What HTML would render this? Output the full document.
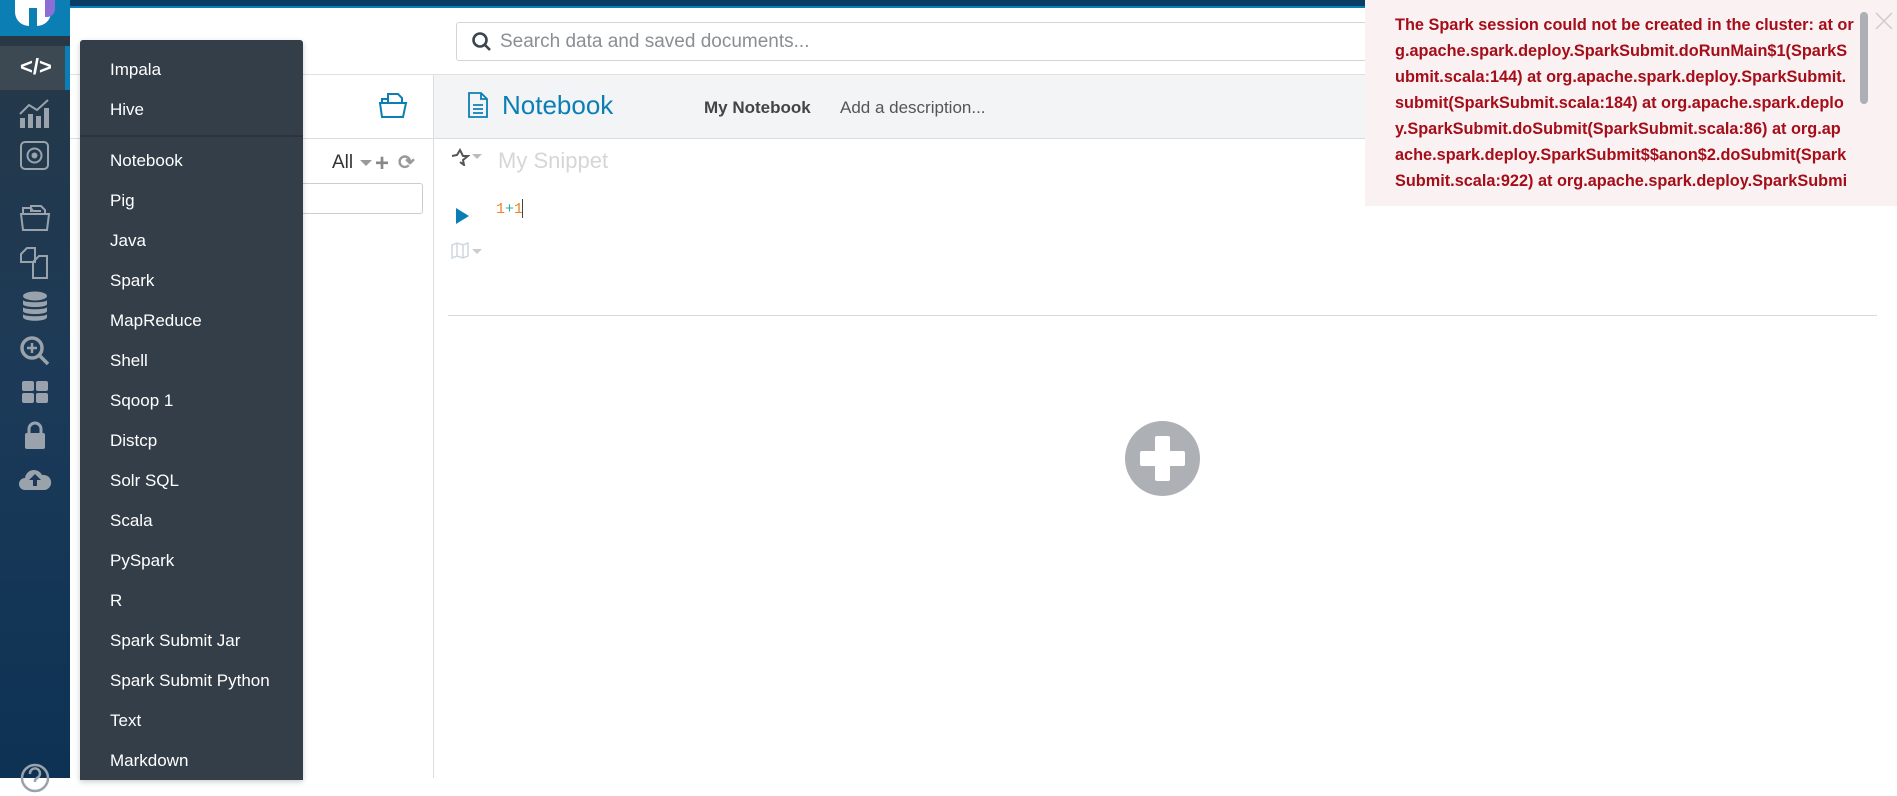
<!DOCTYPE html>
<html><head><meta charset="utf-8"><style>
*{box-sizing:border-box;margin:0;padding:0}
body{width:1897px;height:778px;overflow:hidden;background:#fff;font-family:"Liberation Sans",sans-serif;position:relative}
.abs{position:absolute}
#side{left:0;top:0;width:70px;height:778px;background:linear-gradient(#263846,#1c3a58 50%,#0d3254)}
#logo{left:0;top:0;width:70px;height:36px;background:#0b7eb3;overflow:hidden}
#topbar{left:70px;top:0;width:1827px;height:6px;background:#0a3d66}
#topbar2{left:70px;top:6px;width:1827px;height:2px;background:#0b7fb5}
.ic{position:absolute;left:17px;width:36px;height:36px}
#dd{left:80px;top:40px;width:223px;height:740px;background:#343e48;border-radius:3px 3px 0 0;box-shadow:0 2px 6px rgba(0,0,0,.2)}
#dd div{position:absolute;left:30px;color:#fff;font-size:17px;line-height:20px}
</style></head><body>
<div class="abs" id="side"></div>
<div class="abs" id="logo"><div class="abs" style="left:15px;top:-18px;width:36px;height:44px;border-radius:0 0 14px 14px;background:#fff"></div><div class="abs" style="left:29px;top:8px;width:8px;height:20px;background:#0b7eb3"></div><div class="abs" style="left:45px;top:-10px;width:10px;height:27px;border-radius:0 0 8px 0;background:#8b6fd6"></div></div>
<div class="abs" style="left:0;top:36px;width:70px;height:10px;background:#2a3846"></div>
<div class="abs" style="left:0;top:46px;width:65px;height:44px;background:#3c4852"></div>
<div class="abs" style="left:65px;top:46px;width:5px;height:44px;background:#0b7fb5"></div>
<div class="abs" style="left:20px;top:54px;color:#fff;font-size:22px;font-weight:bold">&lt;/&gt;</div>
<svg class="ic" style="top:96px" viewBox="0 0 36 36" fill="#9aa3ab" stroke="#9aa3ab"><rect x="3" y="22" width="5" height="10" stroke="none"/><rect x="11" y="18" width="5" height="14" stroke="none"/><rect x="19" y="20" width="5" height="12" stroke="none"/><rect x="27" y="12" width="5" height="20" stroke="none"/><polyline points="3,18 12,9 20,14 31,4" fill="none" stroke-width="2"/></svg>
<svg class="ic" style="top:138px" viewBox="0 0 36 36" fill="none" stroke="#9aa3ab" stroke-width="2"><rect x="4" y="4" width="27" height="27" rx="4"/><circle cx="17.5" cy="17.5" r="7"/><circle cx="17.5" cy="17.5" r="2" fill="#9aa3ab"/></svg>
<svg class="ic" style="top:200px" viewBox="0 0 36 36" fill="none" stroke="#9aa3ab" stroke-width="2"><path d="M4 14h28l-2 16H6z"/><path d="M6 14V8h8l2 3h8"/><path d="M14 12V6h10l4 4v4"/></svg>
<svg class="ic" style="top:244px" viewBox="0 0 36 36" fill="none" stroke="#9aa3ab" stroke-width="2"><path d="M4 10l6-6h8v14H4z"/><path d="M16 18l6-6h8v22H16z"/></svg>
<svg class="ic" style="top:288px" viewBox="0 0 36 36" fill="#9aa3ab"><ellipse cx="18" cy="8" rx="12" ry="4.5"/><path d="M6 12c0 3 24 3 24 0v4c0 4-24 4-24 0z"/><path d="M6 19c0 3 24 3 24 0v4c0 4-24 4-24 0z"/><path d="M6 26c0 3 24 3 24 0v3c0 5-24 5-24 0z"/></svg>
<svg class="ic" style="top:333px" viewBox="0 0 36 36" fill="none" stroke="#9aa3ab" stroke-width="3.5"><circle cx="15" cy="15" r="10"/><path d="M22 22l9 9"/><path d="M15 10v10M10 15h10" stroke-width="2.5"/></svg>
<svg class="ic" style="top:375px" viewBox="0 0 36 36" fill="#9aa3ab"><rect x="5" y="6" width="12" height="10" rx="2"/><rect x="19" y="6" width="12" height="10" rx="2"/><rect x="5" y="18" width="12" height="10" rx="2"/><rect x="19" y="18" width="12" height="10" rx="2"/></svg>
<svg class="ic" style="top:418px" viewBox="0 0 36 36" fill="#9aa3ab"><rect x="8" y="15" width="20" height="16" rx="2"/><path d="M12 15v-4a6 6 0 0 1 12 0v4" fill="none" stroke="#9aa3ab" stroke-width="3"/></svg>
<svg class="ic" style="top:462px" viewBox="0 0 36 36" fill="#9aa3ab"><path d="M8 28a6 6 0 0 1 0-12 9 9 0 0 1 17-3 7 7 0 0 1 3 15z"/><path d="M18 12l-6 6h4v6h4v-6h4z" fill="#1c3a58"/></svg>
<svg class="ic" style="top:760px" viewBox="0 0 36 36" fill="none" stroke="#9aa3ab" stroke-width="2.5"><circle cx="18" cy="18" r="13"/><path d="M13 14a5 5 0 1 1 7 4l-2 2v2"/></svg>

<div class="abs" id="topbar"></div><div class="abs" id="topbar2"></div>
<div class="abs" style="left:456px;top:22px;width:1500px;height:39px;border:1px solid #d5d5d5;border-radius:3px"></div>
<svg class="abs" style="left:471px;top:31px" width="22" height="22" viewBox="0 0 22 22" fill="none" stroke="#3a4550" stroke-width="2.6"><circle cx="9" cy="9" r="6.5"/><path d="M14 14l5 5"/></svg>
<div class="abs" style="left:500px;top:31px;font-size:19px;color:#8a8f94">Search data and saved documents...</div>
<div class="abs" style="left:70px;top:74px;width:1827px;height:1px;background:#e0e0e0"></div>
<div class="abs" style="left:434px;top:75px;width:1463px;height:63px;background:#f3f4f6"></div>
<div class="abs" style="left:70px;top:138px;width:1827px;height:1px;background:#dcdcdc"></div>
<div class="abs" style="left:433px;top:75px;width:1px;height:703px;background:#dcdcdc"></div>
<svg class="abs" style="left:378px;top:92px" width="30" height="28" viewBox="0 0 30 28" fill="none" stroke="#0b7fb5" stroke-width="2"><path d="M2 11h26l-3 14H4z"/><path d="M4 11V7h6"/><path d="M10 10V2h10l4 4v5"/></svg>
<div class="abs" style="left:332px;top:152px;font-size:19px;color:#333">All</div>
<div class="abs" style="left:360px;top:160px;border:6px solid transparent;border-top:6px solid #999;border-bottom:0"></div>
<div class="abs" style="left:375px;top:150px;font-size:24px;font-weight:bold;color:#888">+</div>
<div class="abs" style="left:398px;top:150px;font-size:20px;font-weight:bold;color:#999">⟳</div>
<div class="abs" style="left:290px;top:183px;width:133px;height:31px;border:1px solid #ccc;border-radius:3px"></div>

<svg class="abs" style="left:468px;top:92px" width="20" height="26" viewBox="0 0 20 26" fill="none" stroke="#0b7fb5" stroke-width="1.8"><path d="M1 1h12l6 6v18H1z"/><path d="M13 1v6h6"/><path d="M5 13h10M5 17h10M5 21h10"/></svg>
<div class="abs" style="left:502px;top:90px;font-size:26px;color:#0b7fb5">Notebook</div>
<div class="abs" style="left:704px;top:98px;font-size:17px;font-weight:bold;color:#444">My Notebook</div>
<div class="abs" style="left:840px;top:98px;font-size:17px;color:#555">Add a description...</div>

<svg class="abs" style="left:450px;top:148px" width="20" height="18" viewBox="0 0 20 18" fill="none" stroke="#555" stroke-width="2"><path d="M2 8l5-1 3-5 3 6 5 0-5 4 1 5-4-3"/></svg>
<div class="abs" style="left:472px;top:154px;border:5px solid transparent;border-top:5px solid #bbb;border-bottom:0"></div>
<div class="abs" style="left:498px;top:148px;font-size:22px;color:#d6d6d6">My Snippet</div>
<div class="abs" style="left:456px;top:208px;border:8px solid transparent;border-left:13px solid #0b7fb5;border-right:0"></div>
<div class="abs" style="left:496px;top:201px;font-size:15px;color:#f58220;font-family:'Liberation Mono',monospace">1<span style="color:#3a9">+</span>1</div>
<div class="abs" style="left:522px;top:199px;width:1px;height:19px;background:#444"></div>
<svg class="abs" style="left:451px;top:242px" width="18" height="17" viewBox="0 0 18 17" fill="none" stroke="#cfd8df" stroke-width="1.5"><path d="M1 3l5-2 6 2 5-2v13l-5 2-6-2-5 2zM6 1v13M12 3v13"/></svg>
<div class="abs" style="left:472px;top:249px;border:5px solid transparent;border-top:5px solid #ccc;border-bottom:0"></div>
<div class="abs" style="left:448px;top:315px;width:1429px;height:1px;background:#d8d8d8"></div>
<div class="abs" style="left:1125px;top:421px;width:75px;height:75px;border-radius:50%;background:#adb1b5"></div>
<div class="abs" style="left:1155px;top:436px;width:15px;height:45px;background:#fff;border-radius:2px"></div>
<div class="abs" style="left:1140px;top:451px;width:45px;height:15px;background:#fff;border-radius:2px"></div>

<div class="abs" id="dd">
<div style="top:20px">Impala</div><div style="top:60px">Hive</div>
<div style="left:0;top:95px;width:223px;height:2px;background:#2b343c"></div>
<div style="top:111px">Notebook</div><div style="top:151px">Pig</div><div style="top:191px">Java</div><div style="top:231px">Spark</div><div style="top:271px">MapReduce</div><div style="top:311px">Shell</div><div style="top:351px">Sqoop 1</div><div style="top:391px">Distcp</div><div style="top:431px">Solr SQL</div><div style="top:471px">Scala</div><div style="top:511px">PySpark</div><div style="top:551px">R</div><div style="top:591px">Spark Submit Jar</div><div style="top:631px">Spark Submit Python</div><div style="top:671px">Text</div><div style="top:711px">Markdown</div>
</div>

<div class="abs" style="left:1365px;top:0;width:532px;height:206px;background:#faf2f2"></div>
<div class="abs" style="left:1395px;top:12px;font-size:16.3px;font-weight:bold;color:#a50d19;line-height:26px;white-space:nowrap">The Spark session could not be created in the cluster: at or<br>g.apache.spark.deploy.SparkSubmit.doRunMain$1(SparkS<br>ubmit.scala:144) at org.apache.spark.deploy.SparkSubmit.<br>submit(SparkSubmit.scala:184) at org.apache.spark.deplo<br>y.SparkSubmit.doSubmit(SparkSubmit.scala:86) at org.ap<br>ache.spark.deploy.SparkSubmit$$anon$2.doSubmit(Spark<br>Submit.scala:922) at org.apache.spark.deploy.SparkSubmi</div>
<div class="abs" style="left:1860px;top:12px;width:8px;height:92px;border-radius:4px;background:#acb0b4"></div>
<svg class="abs" style="left:1875px;top:12px" width="18" height="18" viewBox="0 0 18 18" stroke="#ccc" stroke-width="1.5"><path d="M1 1l16 16M17 1L1 17"/></svg>
</body></html>
